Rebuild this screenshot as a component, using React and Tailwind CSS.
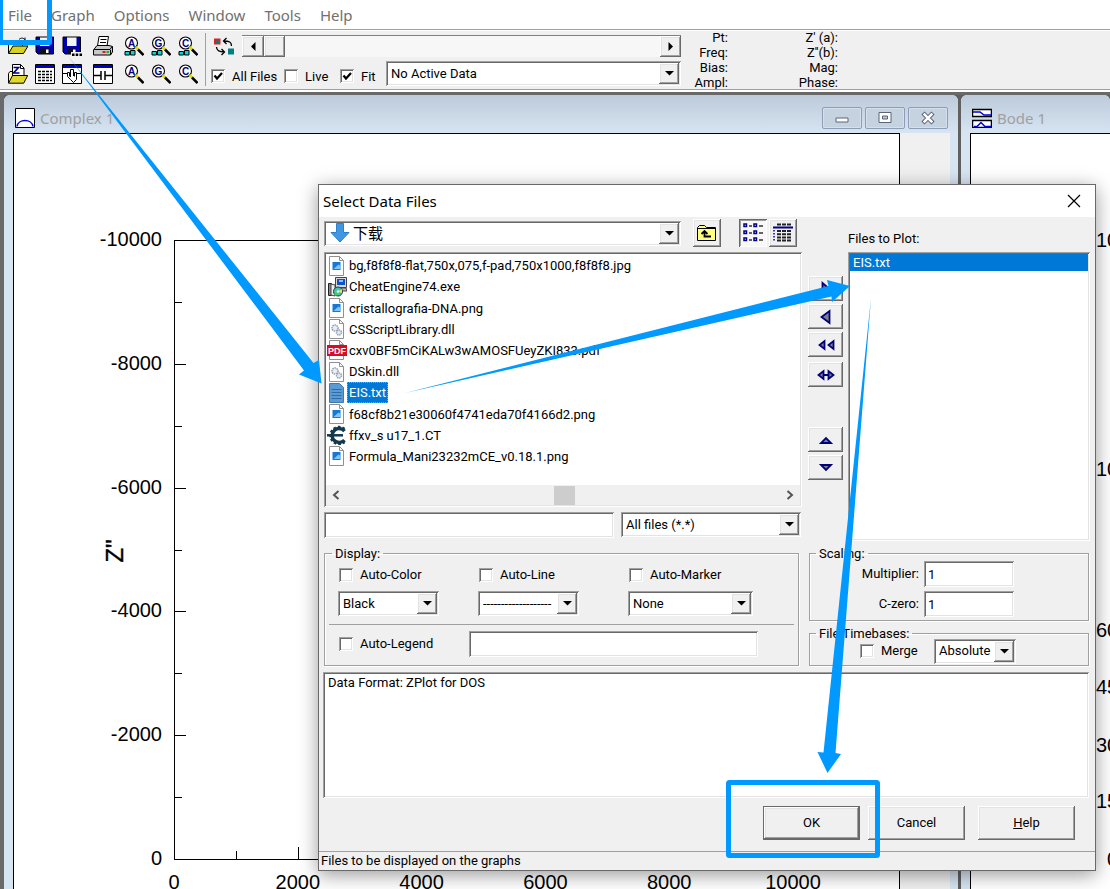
import { useState } from "react";
import clsx from "clsx";

const SUNKEN =
  "bg-white shadow-[inset_1px_1px_0_#a0a0a0,inset_-1px_-1px_0_#fff,inset_2px_2px_0_#696969,inset_-2px_-2px_0_#e3e3e3]";
const RAISED =
  "bg-[#f0f0f0] shadow-[inset_-1px_-1px_0_#696969,inset_1px_1px_0_#fff,inset_-2px_-2px_0_#a0a0a0,inset_2px_2px_0_#e3e3e3]";
const GROUP = "border border-[#a0a0a0] shadow-[1px_1px_0_#fff,inset_1px_1px_0_#fff]";

const MENU = ["File", "Graph", "Options", "Window", "Tools", "Help"];

const FILES = [
  { name: "bg,f8f8f8-flat,750x,075,f-pad,750x1000,f8f8f8.jpg", type: "image" },
  { name: "CheatEngine74.exe", type: "exe" },
  { name: "cristallografia-DNA.png", type: "image" },
  { name: "CSScriptLibrary.dll", type: "dll" },
  { name: "cxv0BF5mCiKALw3wAMOSFUeyZKI833.pdf", type: "pdf" },
  { name: "DSkin.dll", type: "dll" },
  { name: "EIS.txt", type: "txt" },
  { name: "f68cf8b21e30060f4741eda70f4166d2.png", type: "image" },
  { name: "ffxv_s u17_1.CT", type: "ct" },
  { name: "Formula_Mani23232mCE_v0.18.1.png", type: "image" },
];

/* ---------- toolbar icons, all on a 20px grid ---------- */

function Svg({ children, size = 20, className }) {
  return (
    <svg width={size} height={size} viewBox={`0 0 ${size} ${size}`} className={clsx("shrink-0", className)} aria-hidden>
      {children}
    </svg>
  );
}

function OpenIcon() {
  return (
    <Svg>
      <path d="M.5 17V6.500l1.500-2h4l1.500 2h7v4" fill="#ffff9c" stroke="#000" />
      <path d="M.5 17.500l4.500-7.500h15l-4.500 7.500z" fill="#d8d020" stroke="#000" />
      <path d="M11 3.500c2-2 5-2 6 1m0-3v3h-3" fill="none" stroke="#000" />
    </Svg>
  );
}

function OpenZIcon() {
  return (
    <Svg>
      <path d="M.5 19V9.500l1.500-2h4v4h9v4" fill="#ffff9c" stroke="#000" />
      <path d="M4.500 12V.500h8l3.500 3.500v8z" fill="#fff" stroke="#000" />
      <path d="M12.500.500v4H16" fill="none" stroke="#000" />
      <path d="M5.500 3.500h5l-5 5.500h6" fill="none" stroke="#00008b" strokeWidth="1.600" />
      <path d="M.5 19.200l4-7.700h15.200l-4 7.700z" fill="#e0d830" stroke="#000" />
    </Svg>
  );
}

function SaveIcon({ dots }) {
  return (
    <Svg>
      <path d="M1 1h17.500v17H3l-2-2z" fill="#0000b0" stroke="#000" />
      <path d="M5 1.500h9.500V10H5z" fill="#f4f4f4" />
      <path d="M5 12.500h9V18H5z" fill="#111" />
      <path d="M11 13.500h2.500V17H11z" fill="#fff" />
      {dots && (
        <>
          <path d="M9 16h11v4H9z" fill="#f0f0f0" />
          <path d="M10 17.500h2.500V20H10zM13.700 17.500h2.500V20h-2.500zM17.500 17.500H20V20h-2.500z" fill="#000" />
        </>
      )}
    </Svg>
  );
}

function PrintIcon() {
  return (
    <Svg>
      <path d="M4.500 10l1.500-9.500h9.500L14 10z" fill="#fff" stroke="#000" />
      <path d="M7.500 3.500h6M7 6.500h6" stroke="#000" />
      <path d="M.5 14l3.500-4.500h12l3.500 1v5.500l-2 3H.5z" fill="#c8c8c8" stroke="#000" />
      <path d="M1 13.500h16l2-3M17.500 14v5" fill="none" stroke="#000" />
      <path d="M9.500 15h3v2h-3z" fill="#e02020" />
      <path d="M13.500 15h2.500v2h-2.500z" fill="#20b020" />
    </Svg>
  );
}

function ZoomIcon({ letter, auto }) {
  return (
    <Svg>
      <circle cx="7.500" cy="7" r="6" fill="#fff" stroke="#000" strokeWidth="1.100" />
      {auto && <path d="M1 15.500h4.500V19H1zM6.500 14.500H11V19H6.500z" fill="#00d8d8" stroke="#000" />}
      <path d="M11.500 11l3 3" stroke="#e0d800" strokeWidth="2.500" />
      <path d="M14 13.500l5.500 5.500" stroke="#000" strokeWidth="2.500" />
      <text x="7.500" y="10.500" textAnchor="middle" className="fill-[#00008b] font-['Liberation_Sans'] text-[10px] font-bold">
        {letter}
      </text>
    </Svg>
  );
}

function WindowFrame() {
  return (
    <>
      <path d="M.5.500h19v19H.5z" fill="#fff" stroke="#000" />
      <path d="M1 1h18v3H1z" fill="#0000d0" />
    </>
  );
}

function TableIcon() {
  return (
    <Svg>
      <WindowFrame />
      <path d="M3 7.500h14M3 10.500h14M3 13.500h14M3 16.500h14" stroke="#000" strokeWidth="1.500" strokeDasharray="3 1" />
    </Svg>
  );
}

function HandIcon() {
  return (
    <Svg>
      <WindowFrame />
      <path d="M1 9.500h5M14 9.500h5" stroke="#000" />
      <path d="M5.500 8.500v4l3 3 3 3 3-3v-7h-2v4M8.500 13V5.500h3V12M5.500 8.500h2v4" fill="#fff" stroke="#000" />
    </Svg>
  );
}

function CapacitorIcon() {
  return (
    <Svg>
      <WindowFrame />
      <path d="M1 11.500h7M12 11.500h7M8 7v9M12 7v9" stroke="#000" strokeWidth="1.500" />
    </Svg>
  );
}

function SwapIcon() {
  return (
    <Svg>
      <path d="M0 2.500h6.500v6H0z" fill="#e02020" />
      <path d="M2 4.500h3.500V8H2z" fill="#008080" />
      <path d="M14 12.500h6v6h-6z" fill="#008080" />
      <path d="M17.500 10c0-4-2-5-8-5m3-3l-3 3 3 3" fill="none" stroke="#000" strokeWidth="1.300" />
      <path d="M2.500 11c0 4 3 5 8 5m-3-3l3 3-3 3" fill="none" stroke="#000" strokeWidth="1.300" />
    </Svg>
  );
}

const TOOLS = [
  [
    { label: "Open", icon: <OpenIcon /> },
    { label: "Save", icon: <SaveIcon /> },
    { label: "Save as", icon: <SaveIcon dots /> },
    { label: "Print", icon: <PrintIcon />, gap: true },
    { label: "Autoscale all", icon: <ZoomIcon letter="A" auto />, gap: true },
    { label: "Autoscale graph", icon: <ZoomIcon letter="G" auto /> },
    { label: "Autoscale cursor", icon: <ZoomIcon letter="C" auto /> },
  ],
  [
    { label: "Open ZPlot", icon: <OpenZIcon /> },
    { label: "Data table", icon: <TableIcon /> },
    { label: "Pick points", icon: <HandIcon /> },
    { label: "Circuit", icon: <CapacitorIcon />, gap: true },
    { label: "Zoom all", icon: <ZoomIcon letter="A" />, gap: true },
    { label: "Zoom graph", icon: <ZoomIcon letter="G" /> },
    { label: "Zoom cursor", icon: <ZoomIcon letter="C" /> },
  ],
];

/* ---------- classic controls ---------- */

function Arrow({ dir = "down" }) {
  const d = {
    down: "M0 2h9L4.500 6.500z",
    left: "M6.500 0v9L2 4.500z",
    right: "M2.500 0v9L7 4.500z",
  }[dir];
  return (
    <svg width="9" height="9" viewBox="0 0 9 9" aria-hidden>
      <path d={d} fill="#000" />
    </svg>
  );
}

function Combo({ label, options, className, children }) {
  return (
    <div className={clsx("relative flex h-[25px] items-center p-[2px]", SUNKEN, className)}>
      {children}
      <select aria-label={label} className="h-full w-full min-w-0 appearance-none bg-transparent px-[3px] outline-none">
        {options.map((o) => (
          <option key={o}>{o}</option>
        ))}
      </select>
      <span className={clsx("pointer-events-none absolute inset-y-[2px] right-[2px] flex w-5 items-center justify-center", RAISED)}>
        <Arrow />
      </span>
    </div>
  );
}

function Check({ label, checked = false, className }) {
  const [on, setOn] = useState(checked);
  return (
    <label className={clsx("flex items-center gap-[7px] whitespace-nowrap", className)}>
      <span className="relative h-[14px] w-[14px] shrink-0">
        <input
          type="checkbox"
          checked={on}
          onChange={() => setOn(!on)}
          className={clsx("block h-[14px] w-[14px] appearance-none", SUNKEN)}
        />
        {on && (
          <svg width="14" height="14" viewBox="0 0 14 14" className="pointer-events-none absolute inset-0" aria-hidden>
            <path d="M3.500 6.500l2.500 3 5-5.500" fill="none" stroke="#000" strokeWidth="2.200" />
          </svg>
        )}
      </span>
      {label}
    </label>
  );
}

function TextBox({ label, value = "", className }) {
  return <input type="text" aria-label={label} defaultValue={value} className={clsx("h-[26px] min-w-0 px-1 outline-none", SUNKEN, className)} />;
}

/* ---------- main window ---------- */

function Toolbar() {
  return (
    <div className="flex h-[61px] shrink-0 overflow-hidden border-y border-[#a0a0a0] bg-[#f0f0f0] pl-1 text-[13px] shadow-[inset_0_1px_0_#fff]">
      <div className="flex flex-col gap-1 pt-1">
        {TOOLS.map((row, i) => (
          <div key={i} className="flex">
            {row.map(({ label, icon, gap }) => (
              <button key={label} aria-label={label} className={clsx("flex h-6 w-[27px] items-center justify-center", gap && "ml-1")}>
                {icon}
              </button>
            ))}
          </div>
        ))}
      </div>
      <div className="my-[3px] ml-1 w-px bg-[#a0a0a0]" />
      <div className="flex w-[475px] flex-col gap-1 pt-1">
        <div className="flex h-6 items-center">
          <button aria-label="Swap" className="flex w-9 justify-center">
            <SwapIcon />
          </button>
          <div className="flex h-[22px] flex-1 border-t border-[#808080] bg-[#f7f7f7]">
            <button aria-label="Previous point" className={clsx("flex w-[22px] items-center justify-center", RAISED)}>
              <Arrow dir="left" />
            </button>
            <div className={clsx("w-[21px]", RAISED)} />
            <button aria-label="Next point" className={clsx("ml-auto flex w-[21px] items-center justify-center", RAISED)}>
              <Arrow dir="right" />
            </button>
          </div>
        </div>
        <div className="flex h-6 items-end pl-[5px]">
          <Check label="All Files" checked className="w-[73px]" />
          <Check label="Live" className="w-14" />
          <Check label="Fit" checked className="w-[46px]" />
          <Combo label="Active data" options={["No Active Data"]} className="flex-1" />
        </div>
      </div>
      <div className="w-[47px] text-right leading-[15px]">
        <p>Pt:</p>
        <p>Freq:</p>
        <p>Bias:</p>
        <p>Ampl:</p>
      </div>
      <div className="w-[110px] text-right leading-[15px]">
        <p>Z' (a):</p>
        <p>Z''(b):</p>
        <p>Mag:</p>
        <p>Phase:</p>
      </div>
    </div>
  );
}

function CaptionButton({ label, children }) {
  return (
    <button
      aria-label={label}
      className="flex h-[22px] w-10 items-center justify-center rounded-[2px] border border-[#8e9db5] bg-[#c5d3e1] shadow-[inset_0_0_0_1px_#d5e0ec]"
    >
      <svg width="14" height="14" viewBox="0 0 14 14" aria-hidden>
        {children}
      </svg>
    </button>
  );
}

function MdiWindow({ title, icon, buttons, className, children }) {
  return (
    <section className={clsx("flex flex-col overflow-hidden rounded-t-md bg-[#d7e4f2]", className)}>
      <header className="flex h-[38px] shrink-0 items-center bg-linear-to-b from-[#bccada] to-[#d7e4f2] pt-2 pr-[10px] pl-[11px]">
        {icon}
        <h2 className="ml-[5px] flex-1 font-['Noto_Sans',sans-serif] text-[15px] leading-5 text-[#a0a0a0]">{title}</h2>
        {buttons}
      </header>
      {children}
    </section>
  );
}

// axis runs 0 .. 10000 in steps of 1000, 619px on screen
const ORIGIN = { x: 160, y: 725 };
const STEP = 61.9;

function ComplexPlot() {
  const steps = Array.from({ length: 11 }, (_, i) => i);
  return (
    <svg width="885" height="756" viewBox="0 0 885 756" className="font-['Liberation_Sans',sans-serif] text-[20px]" role="img" aria-label="Complex plot">
      <g stroke="#000" fill="none" shapeRendering="crispEdges">
        <path d={`M${ORIGIN.x} ${ORIGIN.y}V106H779V${ORIGIN.y}z`} />
        {steps.map((i) => {
          const len = i % 2 ? 8 : 12;
          return (
            <g key={i}>
              <path d={`M${ORIGIN.x} ${Math.round(ORIGIN.y - i * STEP)}h${len}`} />
              <path d={`M${Math.round(ORIGIN.x + i * STEP)} ${ORIGIN.y}v${-len}`} />
            </g>
          );
        })}
      </g>
      {steps
        .filter((i) => i % 2 === 0)
        .map((i) => (
          <g key={i}>
            <text x={ORIGIN.x - 12} y={ORIGIN.y + 6 - i * STEP} textAnchor="end">
              {i ? `-${i * 1000}` : "0"}
            </text>
            <text x={ORIGIN.x + i * STEP} y={ORIGIN.y + 30} textAnchor="middle">
              {i * 1000}
            </text>
          </g>
        ))}
      <text transform="translate(109 417) rotate(-90)" textAnchor="middle" className="stroke-black text-[24px]" strokeWidth=".4">
        Z"
      </text>
    </svg>
  );
}

const BODE_LABELS = [
  [125, 113, "10"],
  [125, 342, "10"],
  [125, 503, "60"],
  [125, 560, "45"],
  [125, 618, "30"],
  [125, 674, "15"],
  [136, 732, "0"],
];

function BodePlot() {
  return (
    <svg width="140" height="756" viewBox="0 0 140 756" className="font-['Liberation_Sans',sans-serif] text-[20px]" role="img" aria-label="Bode plot">
      {BODE_LABELS.map(([x, y, text]) => (
        <text key={y} x={x} y={y}>
          {text}
        </text>
      ))}
    </svg>
  );
}

function Workspace() {
  return (
    <main className="flex min-h-0 flex-1 gap-[3px] overflow-hidden border-t-[3px] border-l-4 border-[#696969] bg-[#606060]">
      <MdiWindow
        title="Complex 1"
        className="flex-1"
        icon={
          <Svg>
            <path d="M.5.500h19v19H.5z" fill="#fff" stroke="#000" />
            <path d="M2 18.500c1-8 15-8 16 0" fill="none" stroke="#0000e0" strokeWidth="1.500" />
          </Svg>
        }
        buttons={
          <div className="flex gap-[3px]">
            <CaptionButton label="Minimize">
              <path d="M1 7h12v4H1z" fill="#fff" stroke="#5a6478" />
            </CaptionButton>
            <CaptionButton label="Maximize">
              <path d="M1 1.500h12v10H1z" fill="#fff" stroke="#5a6478" />
              <path d="M4.500 5h5v3h-5z" fill="#b8c6d8" stroke="#5a6478" />
            </CaptionButton>
            <CaptionButton label="Close">
              <path d="M2 2l10 10m0-10L2 12" stroke="#5a6478" strokeWidth="4.500" />
              <path d="M2.700 2.700l8.600 8.600m0-8.600l-8.600 8.600" stroke="#fff" strokeWidth="2.500" />
            </CaptionButton>
          </div>
        }
      >
        <div className="mr-2 ml-[9px] flex min-h-0 flex-1 bg-[#f0f0f0]">
          <div className="mr-[50px] flex-1 overflow-hidden border-x border-t border-black bg-white">
            <ComplexPlot />
          </div>
        </div>
      </MdiWindow>
      <MdiWindow
        title="Bode 1"
        className="w-[149px]"
        icon={
          <Svg>
            <path d="M.5 1.500h19v7H.5zM.5 12.500h19v7H.5z" fill="#fff" stroke="#000" strokeWidth="1.500" />
            <path d="M1 4h7l4 3h7M2 18.500h3l4-4 4 4h6" fill="none" stroke="#0000e0" strokeWidth="1.500" />
          </Svg>
        }
      >
        <div className="ml-[9px] min-h-0 flex-1 overflow-hidden border-t border-l border-black bg-white">
          <BodePlot />
        </div>
      </MdiWindow>
    </main>
  );
}

/* ---------- file dialog ---------- */

function FileIcon({ type }) {
  const page = (
    <>
      <path d="M2.500.500h10l4 4v15h-14z" fill="#fff" stroke="#909090" />
      <path d="M12.500.500v4h4" fill="none" stroke="#909090" />
    </>
  );
  if (type === "image")
    return (
      <Svg>
        {page}
        <path d="M5.500 6h8v8h-8z" fill="#1478d7" />
        <path d="M6.500 13l5-4.500 2 1.500v3z" fill="#7fc4ff" />
      </Svg>
    );
  if (type === "dll")
    return (
      <Svg>
        {page}
        <circle cx="8" cy="9" r="3" fill="#e8eef4" stroke="#93a0ac" strokeWidth="1.500" strokeDasharray="1.500 .7" />
        <circle cx="12" cy="13.500" r="2.500" fill="#dfe9f2" stroke="#93a0ac" strokeWidth="1.500" strokeDasharray="1.500 .7" />
      </Svg>
    );
  if (type === "txt")
    return (
      <Svg>
        <path d="M2.500.500h10l4 4v15h-14z" fill="#5b9bd5" stroke="#3f78ad" />
        <path d="M4.500 6.500h10M4.500 9.500h10M4.500 12.500h10M4.500 15.500h10" stroke="#2f6ca5" />
      </Svg>
    );
  if (type === "pdf")
    return (
      <Svg>
        {page}
        <path d="M0 5h20v11H0z" fill="#d80c24" />
        <text x="10" y="14" textAnchor="middle" className="fill-white font-['Liberation_Sans'] text-[9px] font-bold">
          PDF
        </text>
      </Svg>
    );
  if (type === "exe")
    return (
      <Svg>
        <path d="M8.500.500h11v10h-11z" fill="#d8d8d8" stroke="#444" />
        <path d="M10 2h8v6h-8z" fill="#1050c8" />
        <path d="M12 3h4v2h-4z" fill="#80c8ff" />
        <path d="M14 11h5l1 3h-7z" fill="#bbb" stroke="#444" />
        <path d="M1.500 6.500h3v12h-3z" fill="#888" stroke="#222" />
        <path d="M4 7l4 1v11l-4-1z" fill="#eee" stroke="#444" />
        <circle cx="11" cy="14.500" r="4.500" fill="#3ec6b0" stroke="#333" />
        <path d="M11 14.500l4-2.500v4z" fill="#f0e040" />
        <path d="M11 14.500l-4 2.500 2 2z" fill="#58d030" />
        <circle cx="11" cy="14.500" r="1.200" fill="#fff" />
      </Svg>
    );
  return (
    <Svg>
      <path d="M17.500 6A7 7 0 1 0 17.500 15" fill="none" stroke="#14384c" strokeWidth="3.500" />
      <path d="M17.500 4A8.500 8.500 0 1 0 17.500 17" fill="none" stroke="#14384c" strokeWidth="2.500" strokeDasharray="2.500 2" />
      <path d="M0 10.300h16" stroke="#14384c" strokeWidth="2.500" />
    </Svg>
  );
}

function FileList() {
  const [selected, setSelected] = useState("EIS.txt");
  return (
    <div className={clsx("flex h-[255px] flex-col p-[2px]", SUNKEN)}>
      <ul className="flex h-[213px] flex-col pt-px">
        {FILES.map(({ name, type }) => (
          <li key={name} className="flex flex-1 items-center">
            <button onClick={() => setSelected(name)} className="flex items-center pl-px">
              <FileIcon type={type} />
              <span
                className={clsx(
                  "border border-dotted px-px leading-[19px] whitespace-nowrap",
                  selected === name ? "border-[#ff8728] bg-[#0078d7] text-white" : "border-transparent"
                )}
              >
                {name}
              </span>
            </button>
          </li>
        ))}
      </ul>
      <div className="mt-auto flex h-5 items-center bg-[#f0f0f0]">
        <button aria-label="Scroll left" className="flex w-5 justify-center">
          <svg width="8" height="10" viewBox="0 0 8 10" aria-hidden>
            <path d="M6.500 1L2 5l4.500 4" fill="none" stroke="#555" strokeWidth="2" />
          </svg>
        </button>
        <div className="flex-1">
          <div className="ml-[48%] h-[19px] w-[21px] bg-[#cdcdcd]" />
        </div>
        <button aria-label="Scroll right" className="flex w-5 justify-center">
          <svg width="8" height="10" viewBox="0 0 8 10" aria-hidden>
            <path d="M1.500 1L6 5 1.500 9" fill="none" stroke="#555" strokeWidth="2" />
          </svg>
        </button>
      </div>
    </div>
  );
}

function LookInRow() {
  return (
    <div className="flex h-7 items-center">
      <Combo label="Look in" options={["下载"]} className="w-[357px] text-[15px]">
        <svg width="20" height="20" viewBox="0 0 20 20" className="ml-1 shrink-0" aria-hidden>
          <path d="M6.500.500h7v9H19L10 19 1 9.500h5.500z" fill="#3f97e4" stroke="#2a80cc" />
        </svg>
      </Combo>
      <button aria-label="Up one level" className={clsx("ml-3 flex h-7 w-7 items-center justify-center", RAISED)}>
        <Svg>
          <path d="M.5 17.500V4.500l2-2h5l2 2h9v13z" fill="#ffff80" stroke="#000" />
          <path d="M.5 5.500h18" stroke="#000" />
          <path d="M7.500 8v5.500H14M4.500 11l3-3 3 3" fill="none" stroke="#000" strokeWidth="1.800" />
        </Svg>
      </button>
      <button
        aria-label="List"
        className="ml-[18px] flex h-7 w-7 items-center justify-center bg-[#f8f8f8] shadow-[inset_1px_1px_0_#696969,inset_-1px_-1px_0_#fff,inset_2px_2px_0_#a0a0a0]"
      >
        <Svg>
          {[2, 9, 16].map((y) => (
            <g key={y} strokeWidth="1.500" fill="none">
              <path d={`M1 ${y - 1}h2.500v2.500H1zM11 ${y - 1}h2.500v2.500H11z`} stroke="#00008b" />
              <path d={`M6 ${y + 1}h3M16 ${y + 1}h4`} stroke="#333" />
            </g>
          ))}
        </Svg>
      </button>
      <button aria-label="Details" className={clsx("ml-[2px] flex h-7 w-7 items-center justify-center", RAISED)}>
        <Svg>
          <path d="M4 1.500h14" stroke="#222" strokeWidth="2" strokeDasharray="4 1" />
          <path d="M0 4.500h20" stroke="#00008b" strokeWidth="2" />
          <path d="M1 7v12" stroke="#00008b" strokeWidth="1.500" strokeDasharray="1.500 1.500" />
          <path d="M4 8h14M4 11.200h14M4 14.400h14M4 17.600h14" stroke="#222" strokeWidth="2" strokeDasharray="4 1" />
        </Svg>
      </button>
    </div>
  );
}

function MoveButton({ label, d, className }) {
  return (
    <button aria-label={label} className={clsx("flex h-[25px] w-[35px] items-center justify-center", RAISED, className)}>
      <svg width="18" height="16" viewBox="0 0 18 16" aria-hidden>
        <path d={d} fill="#808080" stroke="#00007b" strokeWidth="1.800" />
      </svg>
    </button>
  );
}

function DisplayGroup() {
  return (
    <fieldset className={clsx("w-[475px] px-1 pb-[6px]", GROUP)}>
      <legend className="ml-[3px] px-[3px] leading-[15px]">Display:</legend>
      <div className="grid grid-cols-[140px_150px_126px] gap-y-[9px] pt-[7px] pl-[9px]">
        <Check label="Auto-Color" className="h-[14px] pl-px" />
        <Check label="Auto-Line" className="h-[14px] pl-px" />
        <Check label="Auto-Marker" className="h-[14px] pl-px" />
        <Combo label="Color" options={["Black"]} className="w-[101px]" />
        <Combo label="Line" options={["-------------------"]} className="w-[101px]" />
        <Combo label="Marker" options={["None"]} className="w-[125px]" />
      </div>
      <div className="mt-2 border-t border-[#a0a0a0] shadow-[inset_0_1px_0_#fff]" />
      <div className="flex items-center pt-[6px] pl-[9px]">
        <Check label="Auto-Legend" className="w-[131px] pl-px" />
        <TextBox label="Legend" className="w-[289px]" />
      </div>
    </fieldset>
  );
}

function DialogButton({ children, primary }) {
  return (
    <button className={clsx("h-[34px] w-[97px]", RAISED, primary && "border border-[#696969]")}>{children}</button>
  );
}

function SelectFilesDialog() {
  return (
    <div
      role="dialog"
      aria-label="Select Data Files"
      className="absolute top-[184px] left-[318px] w-[778px] border border-[#696969] bg-[#f0f0f0] shadow-[0_4px_18px_rgba(0,0,0,0.4)]"
    >
      <div className="flex h-8 items-center justify-between bg-white pr-[14px] pl-1">
        <h1 className="font-['Noto_Sans',sans-serif] text-[15px]">Select Data Files</h1>
        <button aria-label="Close">
          <svg width="14" height="14" viewBox="0 0 14 14" aria-hidden>
            <path d="M1 1l12 12M13 1L1 13" stroke="#000" strokeWidth="1.200" />
          </svg>
        </button>
      </div>

      <div className="flex pt-[2px] pl-[5px]">
        <div className="w-[478px]">
          <LookInRow />
          <div className="mt-[5px]">
            <FileList />
          </div>
          <div className="mt-[5px] flex gap-[7px]">
            <TextBox label="File name" className="w-[290px]" />
            <Combo label="File type" options={["All files (*.*)"]} className="w-[180px]" />
          </div>
        </div>

        <div className="ml-[6px] flex flex-col gap-[3px] pt-[57px]">
          <MoveButton label="Add" d="M5.500 2v12l7-6z" />
          <MoveButton label="Remove" d="M12.500 2v12l-8-6z" />
          <MoveButton label="Remove all" d="M7.500 4v8l-5-4zM16.500 4v8l-5-4z" />
          <MoveButton label="Swap" d="M6.500 4v8l-5-4zM11.500 4v8l5-4zM6.500 8h5" className="mt-[2px]" />
          <MoveButton label="Move up" d="M4 11h10l-5-5z" className="mt-[37px]" />
          <MoveButton label="Move down" d="M4 5h10l-5 5z" />
        </div>

        <div className="ml-[5px] w-[242px]">
          <p className="flex h-[33px] items-end pb-1">Files to Plot:</p>
          <div className={clsx("h-[289px] p-[2px]", SUNKEN)}>
            <p className="bg-[#0078d7] px-[3px] leading-[17px] text-white">EIS.txt</p>
          </div>
        </div>
      </div>

      <div className="mt-[5px] flex gap-[10px] pl-[5px]">
        <DisplayGroup />
        <div className="flex w-[280px] flex-col">
          <fieldset className={clsx("flex h-[75px] flex-col gap-1 pr-[74px]", GROUP)}>
            <legend className="ml-[6px] px-[3px] leading-[15px]">Scaling:</legend>
            <label className="flex items-center justify-end gap-[5px]">
              Multiplier:
              <TextBox label="Multiplier" value="1" className="w-[90px]" />
            </label>
            <label className="flex items-center justify-end gap-[5px]">
              C-zero:
              <TextBox label="C-zero" value="1" className="w-[90px]" />
            </label>
          </fieldset>
          <fieldset className={clsx("mt-[5px] h-[40px]", GROUP)}>
            <legend className="ml-[6px] px-[3px] leading-[15px]">File Timebases:</legend>
            <div className="-mt-[2px] flex h-6 items-center pl-[50px]">
              <Check label="Merge" className="w-[74px]" />
              <Combo label="Timebase" options={["Absolute"]} className="w-[82px]" />
            </div>
          </fieldset>
        </div>
      </div>

      <div className={clsx("mt-[6px] mr-[6px] ml-[4px] h-[126px] px-[5px] pt-[3px] leading-[16px]", SUNKEN)}>
        Data Format: ZPlot for DOS
      </div>

      <div className="mt-2 mr-5 flex justify-end">
        <DialogButton primary>OK</DialogButton>
        <div className="ml-2 flex gap-[13px]">
          <DialogButton>Cancel</DialogButton>
          <DialogButton>
            <u>H</u>elp
          </DialogButton>
        </div>
      </div>

      <div className="mt-[11px] border-t border-[#a0a0a0] px-[2px] leading-[18px]">Files to be displayed on the graphs</div>
    </div>
  );
}

/* ---------- tutorial marks ---------- */

function Marks() {
  return (
    <svg width="1110" height="889" viewBox="0 0 1110 889" className="pointer-events-none absolute top-0 left-0" aria-hidden>
      <g fill="none" stroke="#0099ff" strokeWidth="5" strokeLinejoin="round">
        <rect x=".5" y="-5" width="49" height="47.5" />
        <rect x="728.5" y="782.5" width="149" height="73" rx="1" />
      </g>
      <g fill="#0099ff">
        <path d="M68 56L313.500 363l5.500-3 2.500 23.500-22.500-9 5-4z" />
        <path d="M405 393L828.500 286l-1.500-6 23 6-18 16-.5-5.500z" />
        <path d="M871 298l-35.500 455 5.500 1-13.500 19-10-21 6 .5z" />
      </g>
    </svg>
  );
}

export default function App() {
  return (
    <div className="relative flex h-screen flex-col overflow-hidden bg-[#f0f0f0] font-[Roboto,'Noto_Sans_CJK_SC',sans-serif] text-[13px] text-black">
      <nav className="flex h-[29px] shrink-0 items-center gap-[19px] bg-white pt-[2px] pl-2 font-['Noto_Sans',sans-serif] text-[15px] text-[#707070]" aria-label="Menu">
        {MENU.map((item) => (
          <button key={item}>{item}</button>
        ))}
      </nav>
      <Toolbar />
      <div className="h-[2px] shrink-0 bg-white" />
      <Workspace />
      <SelectFilesDialog />
      <Marks />
    </div>
  );
}
